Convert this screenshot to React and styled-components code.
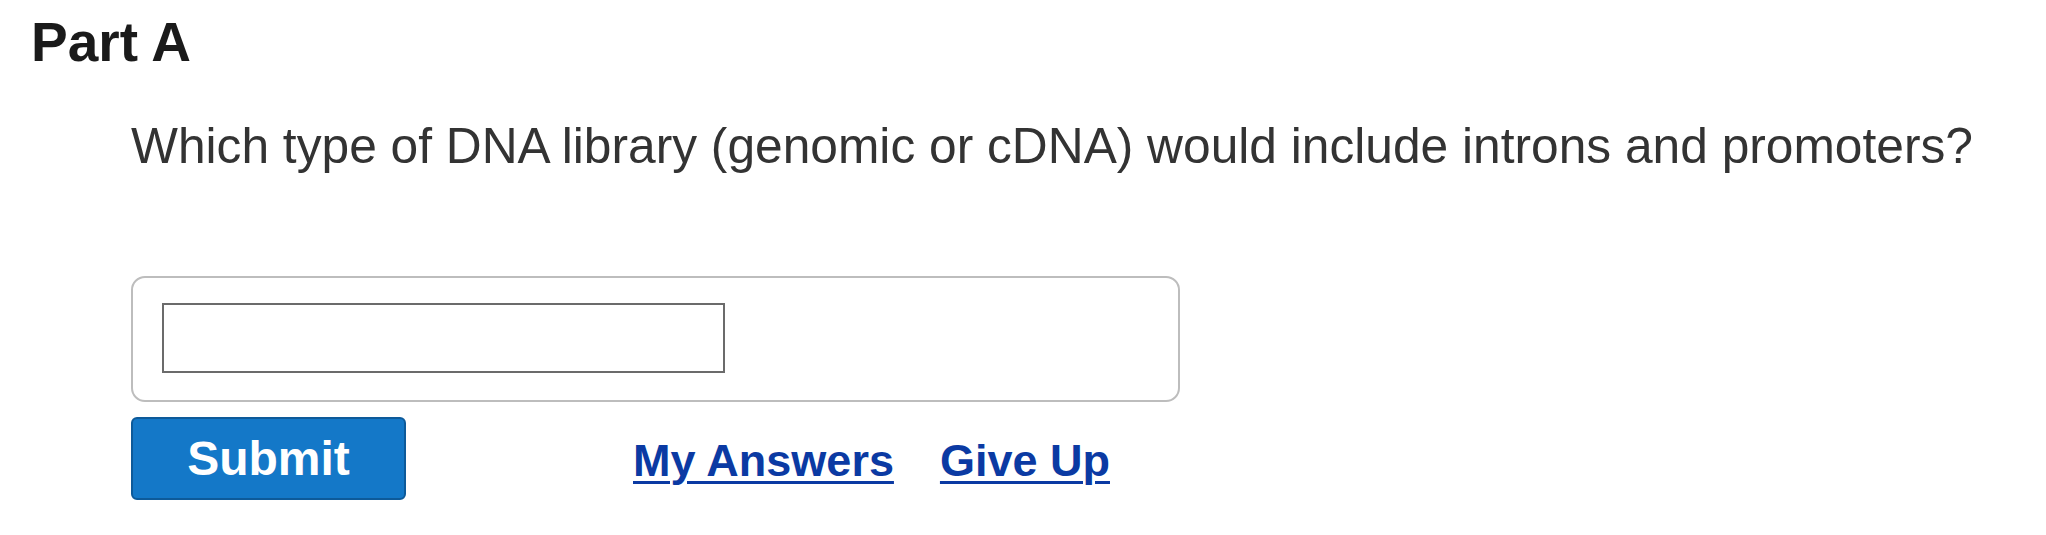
import { styled, createGlobalStyle } from 'styled-components';

const GlobalStyle = createGlobalStyle`
  body {
    margin: 0;
    background: #ffffff;
    font-family: "Liberation Sans", Arial, sans-serif;
  }
`

const Pagina = styled.div`
  padding: 15px 0 0 31px;
`

const Titulo = styled.h2`
  margin: 0;
  font-size: 55px;
  line-height: 55px;
  font-weight: 700;
  color: #1a1a1a;
`

const Corpo = styled.div`
  margin-left: 100px;
  padding-top: 51px;
`

const Pergunta = styled.p`
  margin: 0;
  font-size: 49.7px;
  line-height: 50px;
  color: #333333;
`

const CaixaResposta = styled.div`
  box-sizing: border-box;
  margin-top: 105px;
  width: 1049px;
  height: 126px;
  padding: 25px 29px;
  border: 2px solid #bdbdbd;
  border-radius: 14px;
`

const Campo = styled.input`
  box-sizing: border-box;
  display: block;
  width: 563px;
  height: 70px;
  border: 2px solid #6b6b6b;
  border-radius: 0;
  font-size: 40px;
  font-family: inherit;
  padding: 0 8px;
  outline: none;
`

const Rodape = styled.div`
  display: flex;
  align-items: center;
  margin-top: 15px;
`

const BotaoEnviar = styled.button`
  box-sizing: border-box;
  width: 275px;
  height: 83px;
  margin-right: 227px;
  background-color: #1478c8;
  border: 2px solid #0d5a9a;
  border-radius: 6px;
  color: #ffffff;
  font-family: inherit;
  font-size: 48px;
  line-height: 48px;
  font-weight: 700;
  padding: 0;
`

const Links = styled.div`
  display: flex;
  gap: 46px;
  padding-top: 3px;
`

const Link = styled.a`
  font-size: 45px;
  line-height: 45px;
  font-weight: 700;
  color: #0b3aa3;
  text-decoration: underline;
  text-decoration-thickness: 3px;
  text-underline-offset: 5px;
  cursor: pointer;
`

const App = () => {
  return (
    <Pagina>
      <GlobalStyle />
      <Titulo>Part A</Titulo>
      <Corpo>
        <Pergunta>Which type of DNA library (genomic or cDNA) would include introns and promoters?</Pergunta>
        <CaixaResposta>
          <Campo type="text" />
        </CaixaResposta>
        <Rodape>
          <BotaoEnviar>Submit</BotaoEnviar>
          <Links>
            <Link>My Answers</Link>
            <Link>Give Up</Link>
          </Links>
        </Rodape>
      </Corpo>
    </Pagina>
  );
}

export default App;
